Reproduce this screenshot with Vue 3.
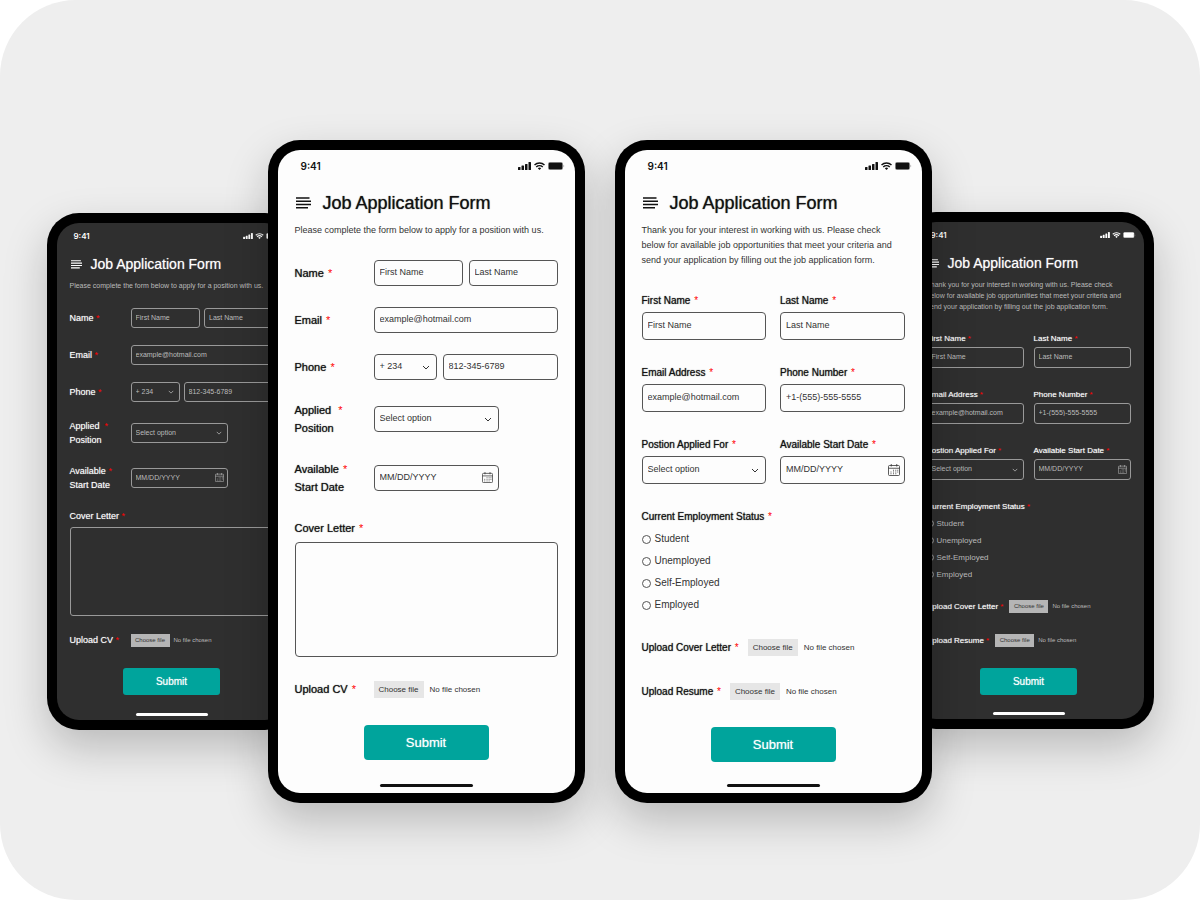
<template>
  <main class="stage">
    <section
      v-for="phone in phones"
      :key="phone.id"
      class="phone"
      :class="[phone.theme, phone.layout]"
    >
      <div class="screen">
        <div class="status-bar">
          <span class="time">9:41</span>
          <span class="signals">
            <svg class="signal-icon" viewBox="0 0 26 16" aria-hidden="true">
              <rect x="0" y="10" width="5" height="6" rx="1" />
              <rect x="7" y="7" width="5" height="9" rx="1" />
              <rect x="14" y="4" width="5" height="12" rx="1" />
              <rect x="21" y="0" width="5" height="16" rx="1" />
            </svg>
            <svg class="wifi-icon" viewBox="0 0 22 16" aria-hidden="true">
              <path d="M1 6 A14.5 14.5 0 0 1 21 6" />
              <path d="M4.5 10 A9.5 9.5 0 0 1 17.5 10" />
              <path class="wifi-dot" d="M11 16 L7.6 12.4 A5 5 0 0 1 14.4 12.4 Z" />
            </svg>
            <svg class="battery-icon" viewBox="0 0 34 16" aria-hidden="true">
              <rect class="battery-case" x="0" y="0" width="30" height="16" rx="4" />
              <rect x="1.5" y="1.5" width="27" height="13" rx="2" />
              <path class="battery-cap" d="M31 5 Q34 8 31 11 Z" />
            </svg>
          </span>
        </div>

        <header class="title-row">
          <button type="button" class="menu" aria-label="Menu">
            <svg viewBox="0 0 30 24" aria-hidden="true">
              <path d="M0 2 H27 M0 8.5 H30 M0 15 H30 M0 21.5 H24" />
            </svg>
          </button>
          <h1>Job Application Form</h1>
        </header>

        <p class="intro">{{ intros[phone.layout] }}</p>

        <form v-if="phone.layout === 'inline'" class="inline-form" @submit.prevent>
          <div class="row">
            <label :for="phone.id + '-first'">Name <i>*</i></label>
            <div class="fields">
              <input :id="phone.id + '-first'" type="text" placeholder="First Name" />
              <input type="text" placeholder="Last Name" aria-label="Last name" />
            </div>
          </div>
          <div class="row">
            <label :for="phone.id + '-email'">Email <i>*</i></label>
            <div class="fields">
              <input :id="phone.id + '-email'" type="email" placeholder="example@hotmail.com" />
            </div>
          </div>
          <div class="row">
            <label :for="phone.id + '-phone'">Phone <i>*</i></label>
            <div class="fields">
              <div class="control code">
                <select aria-label="Country code">
                  <option>+ 234</option>
                </select>
                <svg class="chevron" viewBox="0 0 16 10" aria-hidden="true"><path d="M2 2 L8 8 L14 2" /></svg>
              </div>
              <input :id="phone.id + '-phone'" type="tel" placeholder="812-345-6789" />
            </div>
          </div>
          <div class="row tall">
            <label :for="phone.id + '-position'">Applied &nbsp;<i>*</i><br />Position</label>
            <div class="fields short">
              <div class="control">
                <select :id="phone.id + '-position'">
                  <option>Select option</option>
                </select>
                <svg class="chevron" viewBox="0 0 16 10" aria-hidden="true"><path d="M2 2 L8 8 L14 2" /></svg>
              </div>
            </div>
          </div>
          <div class="row tall">
            <label :for="phone.id + '-start'">Available <i>*</i><br />Start Date</label>
            <div class="fields short">
              <div class="control">
                <input :id="phone.id + '-start'" type="text" placeholder="MM/DD/YYYY" />
                <svg class="calendar" viewBox="0 0 24 24" aria-hidden="true">
                  <rect x="1" y="3" width="22" height="20" rx="2" />
                  <path d="M1 8.5 H23 M6.5 0 V5 M17.5 0 V5" />
                  <path class="days" d="M10 12.5 h2 M14.5 12.5 h2 M18.5 12.5 h2 M5 16 h2 M10 16 h2 M14.5 16 h2 M18.5 16 h2 M5 19.5 h2 M10 19.5 h2 M14.5 19.5 h2" />
                </svg>
              </div>
            </div>
          </div>
          <div class="cover">
            <label :for="phone.id + '-cover'">Cover Letter <i>*</i></label>
            <textarea :id="phone.id + '-cover'"></textarea>
          </div>
          <div class="row upload">
            <label :for="phone.id + '-cv'">Upload CV <i>*</i></label>
            <div class="file">
              <input :id="phone.id + '-cv'" type="file" />
              <label class="pick" :for="phone.id + '-cv'">Choose file</label>
              <span>No file chosen</span>
            </div>
          </div>
          <button type="submit" class="submit">Submit</button>
        </form>

        <form v-else class="stacked-form" @submit.prevent>
          <div class="pairs">
            <div v-for="field in fields" :key="field.name" class="pair">
              <label :for="phone.id + '-' + field.name">{{ field.label }} <i>*</i></label>
              <div class="control">
                <select v-if="field.kind === 'select'" :id="phone.id + '-' + field.name">
                  <option>{{ field.hint }}</option>
                </select>
                <input v-else :id="phone.id + '-' + field.name" type="text" :placeholder="field.hint" />
                <svg v-if="field.kind === 'select'" class="chevron" viewBox="0 0 16 10" aria-hidden="true"><path d="M2 2 L8 8 L14 2" /></svg>
                <svg v-if="field.kind === 'date'" class="calendar" viewBox="0 0 24 24" aria-hidden="true">
                  <rect x="1" y="3" width="22" height="20" rx="2" />
                  <path d="M1 8.5 H23 M6.5 0 V5 M17.5 0 V5" />
                  <path class="days" d="M10 12.5 h2 M14.5 12.5 h2 M18.5 12.5 h2 M5 16 h2 M10 16 h2 M14.5 16 h2 M18.5 16 h2 M5 19.5 h2 M10 19.5 h2 M14.5 19.5 h2" />
                </svg>
              </div>
            </div>
          </div>
          <fieldset>
            <legend>Current Employment Status <i>*</i></legend>
            <label v-for="status in statuses" :key="status" class="choice">
              <input type="radio" :name="phone.id + '-status'" :value="status" />
              <span>{{ status }}</span>
            </label>
          </fieldset>
          <div class="uploads">
            <div v-for="upload in uploads" :key="upload.name" class="upload">
              <label :for="phone.id + '-' + upload.name">{{ upload.label }} <i>*</i></label>
              <div class="file">
                <input :id="phone.id + '-' + upload.name" type="file" />
                <label class="pick" :for="phone.id + '-' + upload.name">Choose file</label>
                <span>No file chosen</span>
              </div>
            </div>
          </div>
          <button type="submit" class="submit">Submit</button>
        </form>

        <div class="home-bar"></div>
      </div>
    </section>
  </main>
</template>

<script setup>
const phones = [
  { id: 'dark-inline', theme: 'dark', layout: 'inline' },
  { id: 'light-inline', theme: 'light', layout: 'inline' },
  { id: 'light-stacked', theme: 'light', layout: 'stacked' },
  { id: 'dark-stacked', theme: 'dark', layout: 'stacked' }
];

const intros = {
  inline: 'Please complete the form below to apply for a position with us.',
  stacked:
    'Thank you for your interest in working with us. Please check below for available job opportunities that meet your criteria and send your application by filling out the job application form.'
};

const fields = [
  { name: 'first', label: 'First Name', hint: 'First Name', kind: 'text' },
  { name: 'last', label: 'Last Name', hint: 'Last Name', kind: 'text' },
  { name: 'email', label: 'Email Address', hint: 'example@hotmail.com', kind: 'text' },
  { name: 'phone', label: 'Phone Number', hint: '+1-(555)-555-5555', kind: 'text' },
  { name: 'position', label: 'Postion Applied For', hint: 'Select option', kind: 'select' },
  { name: 'start', label: 'Available Start Date', hint: 'MM/DD/YYYY', kind: 'date' }
];

const statuses = ['Student', 'Unemployed', 'Self-Employed', 'Employed'];

const uploads = [
  { name: 'cover', label: 'Upload Cover Letter' },
  { name: 'resume', label: 'Upload Resume' }
];
</script>

<style>
body {
  margin: 0;
  background: #fff;
}
</style>

<style scoped>
* {
  box-sizing: border-box;
}

.stage {
  min-height: 100vh;
  padding-top: 43px;
  display: flex;
  justify-content: center;
  align-items: center;
  overflow: hidden;
  border-radius: 76px;
  background: #eee;
  font-family: "Liberation Sans", Arial, Helvetica, sans-serif;
}

/* Front phones */
.phone {
  --text: 9px;
  --line: 15px;
  --small: 8px;
  --title: 18px;
  --label: 11px;
  --label-line: 18px;
  --sub-label: 10px;
  --sub-line: 14px;
  --button: 13px;
  --pad: 17px;
  --label-col: 79px;
  --code-col: 63px;
  --short-col: 125px;
  --control: 26px;
  --control-tall: 28px;
  --gap: 21px;
  --gap-upload: 27px;
  --gap-submit: 27px;
  --field-gap: 6px;
  --ink: #111;
  --soft: #333;
  --medium: rgba(0, 0, 0, 0.75);
  --line-color: #555;
  --screen: #fdfdfd;
  --pick: #e6e6e6;
  --pick-ink: #333;
  position: relative;
  z-index: 1;
  flex: none;
  width: 317px;
  min-height: 663px;
  padding: 10px;
  display: flex;
  border-radius: 32px;
  background: #000;
  box-shadow: 0 18px 44px rgba(0, 0, 0, 0.22);
}

.phone.light + .phone.light {
  margin-left: 30px;
}

/* Back phones */
.phone.dark {
  --text: 7px;
  --line: 11px;
  --small: 6px;
  --title: 14px;
  --label: 9px;
  --label-line: 14px;
  --sub-label: 8px;
  --sub-line: 11px;
  --button: 10px;
  --pad: 13px;
  --label-col: 61px;
  --code-col: 49px;
  --short-col: 97px;
  --control: 20px;
  --control-tall: 21px;
  --gap: 17px;
  --gap-upload: 21px;
  --gap-submit: 21px;
  --field-gap: 4px;
  --ink: #fff;
  --soft: #bbb;
  --medium: rgba(255, 255, 255, 0.6);
  --line-color: #999;
  --screen: #2f2f2f;
  --pick: #b5b5b5;
  z-index: 0;
  width: 250px;
  min-height: 517px;
}

.phone.dark:first-child {
  margin-right: -29px;
}

.phone.dark:last-child {
  margin: 0 0 2px -28px;
}

.screen {
  flex: 1;
  min-width: 0;
  display: flex;
  flex-direction: column;
  padding: 0 var(--pad);
  border-radius: 22px;
  background: var(--screen);
  color: var(--ink);
}

.status-bar {
  display: flex;
  align-items: center;
  justify-content: space-between;
  height: 32px;
  margin: 0 -7px 0 6px;
}

.dark .status-bar {
  height: 25px;
  margin: 0 -5px 0 4px;
}

.time {
  font: 600 10px/14px Inter, sans-serif;
}

.dark .time {
  font-size: 8px;
  line-height: 10px;
}

.signals {
  display: flex;
  align-items: center;
  gap: 3px;
  fill: currentColor;
}

.signals svg {
  display: block;
  height: 8px;
}

.dark .signals {
  gap: 2px;
}

.dark .signals svg {
  height: 6px;
}

.signal-icon {
  width: 13px;
}

.wifi-icon {
  width: 11px;
}

.battery-icon {
  width: 17px;
}

.dark .signal-icon {
  width: 10px;
}

.dark .wifi-icon {
  width: 9px;
}

.dark .battery-icon {
  width: 13px;
}

.wifi-icon path {
  fill: none;
  stroke: currentColor;
  stroke-width: 3;
}

.wifi-icon .wifi-dot {
  fill: currentColor;
  stroke: none;
}

.battery-case {
  opacity: 0.4;
}

.battery-cap {
  opacity: 0.5;
}

.title-row {
  display: flex;
  align-items: center;
  gap: 12px;
  height: 22px;
  margin-top: 10px;
}

.dark .title-row {
  gap: 9px;
  height: 17px;
  margin-top: 8px;
}

.menu {
  width: 16px;
  padding: 0 0 0 1px;
  border: 0;
  background: none;
  color: inherit;
}

.dark .menu {
  width: 12px;
}

.menu svg {
  display: block;
  width: 100%;
  fill: none;
  stroke: currentColor;
  stroke-width: 3;
}

h1 {
  margin: 0;
  font-size: var(--title);
  font-weight: 400;
  line-height: 22px;
  text-shadow: 0 0 1px var(--medium);
  white-space: nowrap;
}

.dark h1 {
  line-height: 17px;
}

.intro {
  margin: 9px 0 0;
  font-size: var(--text);
  line-height: var(--line);
  color: var(--soft);
}

.dark .intro {
  margin-top: 7px;
}

.inline .intro {
  white-space: nowrap;
}

form {
  display: flex;
  flex-direction: column;
}

label,
legend {
  font-size: var(--label);
  line-height: var(--label-line);
  text-shadow: 0 0 1px var(--medium);
}

i {
  margin-left: 1px;
  color: #f00;
  font-style: normal;
  text-shadow: none;
}

.dark i {
  margin-left: 0;
}

input,
select,
textarea {
  display: block;
  width: 100%;
  min-width: 0;
  height: var(--control);
  margin: 0;
  padding: 0 5px 2px;
  border: 1px solid var(--line-color);
  border-radius: 4px;
  outline: 0;
  background: none;
  color: var(--soft);
  font: var(--text)/var(--line) "Liberation Sans", Arial, Helvetica, sans-serif;
  appearance: none;
}

.dark input,
.dark select,
.dark textarea {
  padding: 0 4px 2px;
  border-radius: 3px;
}

input::placeholder {
  color: var(--soft);
  opacity: 1;
}

.control {
  position: relative;
  width: 100%;
}

.chevron {
  position: absolute;
  top: calc(50% - 2px);
  right: 7px;
  width: 8px;
  height: 5px;
  fill: none;
  stroke: var(--soft);
  stroke-width: 2;
  pointer-events: none;
}

.calendar {
  position: absolute;
  top: calc(50% - 6px);
  right: 6px;
  width: 11px;
  height: 11px;
  fill: none;
  stroke: var(--soft);
  stroke-width: 1.6;
}

.stacked .calendar {
  right: 5px;
  width: 12px;
  height: 12px;
}

.dark .chevron {
  right: 6px;
  width: 6px;
  height: 4px;
}

.dark .calendar {
  top: calc(50% - 5px);
  right: 4px;
  width: 9px;
  height: 9px;
}

/* Labels beside the fields */
.inline-form {
  gap: var(--gap);
  margin-top: 22px;
}

.dark .inline-form {
  margin-top: 17px;
}

.row {
  display: grid;
  grid-template-columns: var(--label-col) 1fr;
  align-items: center;
}

.light .row.tall,
.light .cover {
  margin-bottom: 2px;
}

.fields {
  display: flex;
  gap: var(--field-gap);
}

.fields.short {
  width: var(--short-col);
}

.fields .code {
  flex: none;
  width: var(--code-col);
}

.cover label {
  display: block;
  margin-bottom: 5px;
}

.dark .cover label {
  margin-bottom: 4px;
}

.cover textarea {
  height: 115px;
  resize: none;
}

.dark .cover textarea {
  height: 89px;
}

.file {
  display: flex;
  align-items: center;
  gap: var(--field-gap);
  color: var(--soft);
  font-size: var(--small);
  line-height: 17px;
  white-space: nowrap;
}

.file input {
  position: absolute;
  width: 1px;
  height: 1px;
  opacity: 0;
}

.pick {
  width: 50px;
  background: var(--pick);
  color: var(--pick-ink);
  font-size: var(--small);
  line-height: 17px;
  text-align: center;
  text-shadow: none;
}

.dark .file,
.dark .pick {
  line-height: 13px;
}

.dark .pick {
  width: 39px;
}

.row.upload label {
  white-space: nowrap;
}

.upload {
  height: 17px;
}

.dark .upload {
  height: 13px;
}

.submit {
  align-self: center;
  width: 125px;
  height: 35px;
  padding: 0;
  border: 0;
  border-radius: 4px;
  background: #00a49c;
  color: #fff;
  font: var(--button)/20px "Liberation Sans", Arial, Helvetica, sans-serif;
  text-shadow: 0 0 1px rgba(255, 255, 255, 0.7);
}

.dark .submit {
  width: 97px;
  height: 27px;
  border-radius: 3px;
}

.inline .submit {
  margin-top: 7px;
}

.dark.inline .submit {
  margin-top: 5px;
}

/* Labels above the fields */
.stacked-form {
  margin-top: 26px;
}

.dark .stacked-form {
  margin-top: 21px;
}

.stacked-form label,
.stacked-form legend {
  font-size: var(--sub-label);
  line-height: var(--sub-line);
}

.pairs {
  display: grid;
  grid-template-columns: 1fr 1fr;
  gap: 26px 14px;
}

.dark .pairs {
  gap: 21px 10px;
}

.pair label {
  display: block;
  margin-bottom: 4px;
  white-space: nowrap;
}

.dark .pair label {
  margin-bottom: 3px;
}

.pair input,
.pair select {
  height: var(--control-tall);
}

fieldset {
  min-width: 0;
  margin: 26px 0 0;
  padding: 0;
  border: 0;
}

.dark fieldset {
  margin-top: 21px;
}

legend {
  margin-bottom: 4px;
  padding: 0;
}

.dark legend {
  margin-bottom: 3px;
}

.stacked-form .choice {
  display: flex;
  align-items: center;
  gap: 4px;
  color: var(--soft);
  line-height: 22px;
  text-shadow: none;
}

.dark .stacked-form .choice {
  gap: 3px;
  line-height: 17px;
}

.choice input {
  width: 9px;
  height: 9px;
  padding: 0;
  border-radius: 50%;
}

.dark .choice input {
  width: 7px;
  height: 7px;
  padding: 0;
  border-radius: 50%;
}

.choice input:checked {
  background: #00a49c;
}

.uploads {
  display: grid;
  gap: var(--gap-upload);
  margin: 23px 0 var(--gap-submit);
}

.dark .uploads {
  margin-top: 17px;
}

.uploads .upload {
  display: flex;
  align-items: center;
  gap: 9px;
}

.dark .uploads .upload {
  gap: 6px;
}

.stacked-form .pick {
  font-size: var(--small);
  line-height: 17px;
}

.dark .stacked-form .pick {
  line-height: 13px;
}

.home-bar {
  width: 93px;
  height: 3px;
  margin: auto auto 6px;
  border-radius: 2px;
  background: var(--ink);
}

.dark .home-bar {
  width: 72px;
  margin-bottom: 4px;
}
</style>
